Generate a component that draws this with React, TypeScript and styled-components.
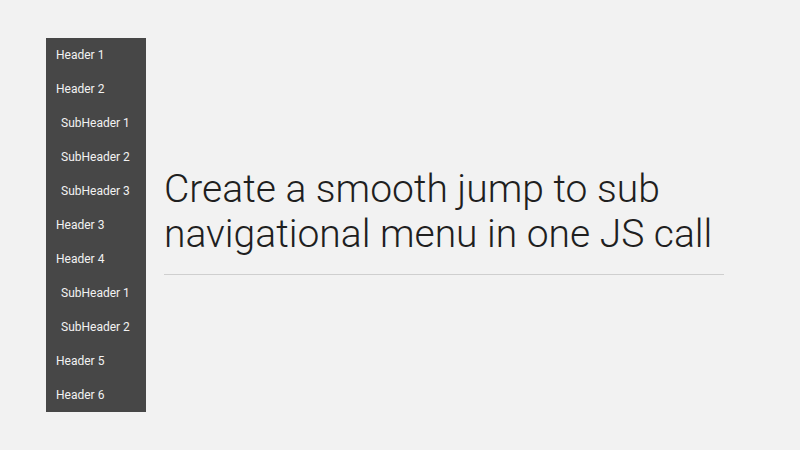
import styled, { createGlobalStyle } from 'styled-components'

const colors = {
  background: '#f2f2f2',
  menu: '#474747',
  menuText: '#f2f2f2',
  ink: '#1f1f1f',
  rule: '#cfcfcf',
};

const GlobalStyle = createGlobalStyle`
  html, body {
    margin: 0;
    padding: 0;
    background: ${colors.background};
  }
`;

const Page = styled.main`
  width: 800px;
  height: 450px;
  box-sizing: border-box;
  padding: 38px 0 0 46px;
  display: flex;
  align-items: flex-start;
  gap: 18px;
  font-family: Roboto, 'Liberation Sans', sans-serif;
`;

const Menu = styled.nav`
  width: 100px;
  background: ${colors.menu};
  display: flex;
  flex-direction: column;
`;

const MenuItem = styled.a<{ $sub?: boolean }>`
  display: block;
  height: 34px;
  line-height: 34px;
  padding-left: ${(p) => (p.$sub ? '15px' : '10px')};
  color: ${colors.menuText};
  font-size: 12px;
  text-decoration: none;
  white-space: nowrap;
`;

const Content = styled.section`
  width: 560px;
  padding-top: 129px;
`;

const Title = styled.h1`
  margin: 0;
  padding-bottom: 17px;
  border-bottom: 1px solid ${colors.rule};
  font-size: 39px;
  line-height: 45px;
  font-weight: 300;
  white-space: nowrap;
  color: ${colors.ink};
`;

const items = [
  { label: 'Header 1' },
  { label: 'Header 2' },
  { label: 'SubHeader 1', sub: true },
  { label: 'SubHeader 2', sub: true },
  { label: 'SubHeader 3', sub: true },
  { label: 'Header 3' },
  { label: 'Header 4' },
  { label: 'SubHeader 1', sub: true },
  { label: 'SubHeader 2', sub: true },
  { label: 'Header 5' },
  { label: 'Header 6' },
];

function App() {
  return (
    <>
      <GlobalStyle />
      <Page>
        <Menu>
          {items.map((item, i) => (
            <MenuItem key={i} $sub={item.sub}>
              {item.label}
            </MenuItem>
          ))}
        </Menu>
        <Content>
          <Title>
            Create a smooth jump to sub
            <br />
            navigational menu in one JS call
          </Title>
        </Content>
      </Page>
    </>
  );
}

export default App
